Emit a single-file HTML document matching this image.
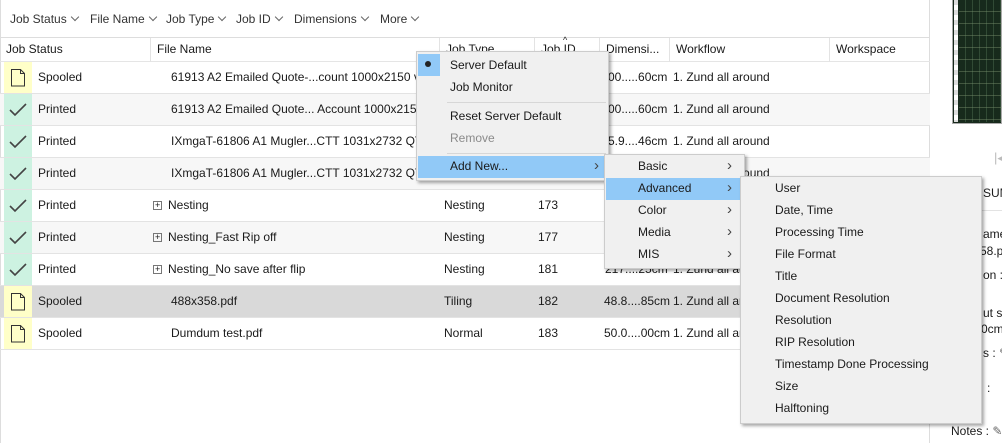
<!DOCTYPE html>
<html><head><meta charset="utf-8"><style>
*{margin:0;padding:0;box-sizing:border-box}
body{width:1002px;height:443px;overflow:hidden;background:#fff;font-family:"Liberation Sans","DejaVu Sans",sans-serif;font-size:12px;color:#1a1a1a;position:relative}
.a{position:absolute;white-space:nowrap}
.tb span{position:absolute;top:12px;color:#333}
.chev{display:inline-block;width:6px;height:6px;border-right:1px solid #666;border-bottom:1px solid #666;transform:rotate(45deg);margin-left:5px;position:relative;top:-3px}
.hdr{position:absolute;top:37px;left:0;width:930px;height:25px;border-top:1px solid #ddd;border-bottom:1px solid #e5e5e5}
.hdr div{position:absolute;top:0;height:24px;line-height:23px;padding-left:6px;border-right:1px solid #e3e3e3}
.row{position:absolute;left:0;width:930px;height:32px;border-bottom:1px solid #e3e3e3}
.row span{position:absolute;top:8px}
.st{position:absolute;left:4px;top:0;width:28px;height:31px}
.y{background:#ffffc8}.g{background:#cdf2e1}
.menu{position:absolute;background:#f0f0f0;border:1px solid #ccc;box-shadow:2px 2px 3px rgba(0,0,0,.35)}
.mi{position:absolute;left:0;right:0;height:22px;line-height:21px}
.hl{background:#91c9f7}
.arr{position:absolute;right:12px;top:-1px;font-size:15px;color:#444}
.sep{position:absolute;height:1px;background:#d7d7d7}
.exp{display:inline-block;width:9px;height:9px;border:1px solid #777;font-size:9px;line-height:7px;text-align:center;margin-right:6px;vertical-align:1px}
</style></head><body>
<div class="a" style="left:0;top:0;width:930px;height:443px;border-right:1px solid #ddd;border-left:1px solid #ddd"></div>
<div class="tb">
<span style="left:10px">Job Status<i class="chev"></i></span>
<span style="left:90px">File Name<i class="chev"></i></span>
<span style="left:166px">Job Type<i class="chev"></i></span>
<span style="left:236px">Job ID<i class="chev"></i></span>
<span style="left:294px">Dimensions<i class="chev"></i></span>
<span style="left:380px">More<i class="chev"></i></span>
</div>
<div class="hdr">
<div style="left:0;width:151px">Job Status</div>
<div style="left:151px;width:289px">File Name</div>
<div style="left:440px;width:95px">Job Type</div>
<div style="left:535px;width:65px">Job ID<span style="position:absolute;left:28px;top:-9px;font-size:9px">^</span></div>
<div style="left:600px;width:70px">Dimensi...</div>
<div style="left:670px;width:160px">Workflow</div>
<div style="left:830px;width:100px;border:none">Workspace</div>
</div>

<div class="row" style="top:62px"><div class="st y"></div><svg class="a" style="left:10px;top:7px" width="16" height="18"><path d="M1.5 .5h9l4 4v12.5h-13z M10.5 .5v4h4" fill="none" stroke="#333"/></svg><span style="left:38px">Spooled</span><span style="left:171px">61913 A2 Emailed Quote-...count 1000x2150 v2</span><span style="left:608px">00.....60cm</span><span style="left:673px">1. Zund all around</span></div>
<div class="row" style="top:94px;background:#f7f7f7"><div class="st g"></div><svg class="a" style="left:9px;top:9px" width="18" height="14"><path d="M1 7l5 5L17 1" fill="none" stroke="#444" stroke-width="1.6"/></svg><span style="left:38px">Printed</span><span style="left:171px">61913 A2 Emailed Quote... Account 1000x2150.</span><span style="left:608px">00.....60cm</span><span style="left:673px">1. Zund all around</span></div>
<div class="row" style="top:126px"><div class="st g"></div><svg class="a" style="left:9px;top:9px" width="18" height="14"><path d="M1 7l5 5L17 1" fill="none" stroke="#444" stroke-width="1.6"/></svg><span style="left:38px">Printed</span><span style="left:171px">IXmgaT-61806 A1 Mugler...CTT 1031x2732 QTR</span><span style="left:608px">5.9....46cm</span><span style="left:673px">1. Zund all around</span></div>
<div class="row" style="top:158px;background:#f7f7f7"><div class="st g"></div><svg class="a" style="left:9px;top:9px" width="18" height="14"><path d="M1 7l5 5L17 1" fill="none" stroke="#444" stroke-width="1.6"/></svg><span style="left:38px">Printed</span><span style="left:171px">IXmgaT-61806 A1 Mugler...CTT 1031x2732 QTR</span><span style="left:673px">1. Zund all around</span></div>
<div class="row" style="top:190px"><div class="st g"></div><svg class="a" style="left:9px;top:9px" width="18" height="14"><path d="M1 7l5 5L17 1" fill="none" stroke="#444" stroke-width="1.6"/></svg><span style="left:38px">Printed</span><span style="left:153px"><i class="exp">+</i>Nesting</span><span style="left:444px">Nesting</span><span style="left:538px">173</span></div>
<div class="row" style="top:222px;background:#f7f7f7"><div class="st g"></div><svg class="a" style="left:9px;top:9px" width="18" height="14"><path d="M1 7l5 5L17 1" fill="none" stroke="#444" stroke-width="1.6"/></svg><span style="left:38px">Printed</span><span style="left:153px"><i class="exp">+</i>Nesting_Fast Rip off</span><span style="left:444px">Nesting</span><span style="left:538px">177</span></div>
<div class="row" style="top:254px"><div class="st g"></div><svg class="a" style="left:9px;top:9px" width="18" height="14"><path d="M1 7l5 5L17 1" fill="none" stroke="#444" stroke-width="1.6"/></svg><span style="left:38px">Printed</span><span style="left:153px"><i class="exp">+</i>Nesting_No save after flip</span><span style="left:444px">Nesting</span><span style="left:538px">181</span><span style="left:605px">217....25cm</span><span style="left:673px">1. Zund all ar</span></div>
<div class="row" style="top:286px;background:#d9d9d9"><div class="st y"></div><svg class="a" style="left:10px;top:7px" width="16" height="18"><path d="M1.5 .5h9l4 4v12.5h-13z M10.5 .5v4h4" fill="none" stroke="#333"/></svg><span style="left:38px">Spooled</span><span style="left:171px">488x358.pdf</span><span style="left:444px">Tiling</span><span style="left:538px">182</span><span style="left:604px">48.8....85cm</span><span style="left:673px">1. Zund all ar</span></div>
<div class="row" style="top:318px"><div class="st y"></div><svg class="a" style="left:10px;top:7px" width="16" height="18"><path d="M1.5 .5h9l4 4v12.5h-13z M10.5 .5v4h4" fill="none" stroke="#333"/></svg><span style="left:38px">Spooled</span><span style="left:171px">Dumdum test.pdf</span><span style="left:444px">Normal</span><span style="left:538px">183</span><span style="left:604px">50.0....00cm</span><span style="left:673px">1. Zund all ar</span></div>

<!-- right panel -->
<div class="a" style="left:952px;top:0;width:50px;height:124px;border:1px solid #aaa;border-top:none;background:#172a1c"></div>
<div class="a" style="left:954px;top:0;width:4px;height:122px;background:repeating-linear-gradient(#ddd 0 5px,#fff 5px 10px)"></div>
<div class="a" style="left:959px;top:0;width:43px;height:122px;background:repeating-linear-gradient(90deg,transparent 0 6px,rgba(110,150,110,.3) 6px 7px),repeating-linear-gradient(transparent 0 11px,rgba(150,170,130,.35) 11px 12px)"></div>
<div class="a" style="left:994px;top:150px;color:#bbb;font-size:13px">|◀</div>
<div class="a" style="left:931px;top:210px;width:71px;height:1px;background:#e3e3e3"></div>
<div class="a" style="left:983px;top:186px">SUM</div>
<div class="a" style="left:983px;top:227px">ame</div>
<div class="a" style="left:980px;top:244px">58.p</div>
<div class="a" style="left:983px;top:268px">on :</div>
<div class="a" style="left:983px;top:306px">ut siz</div>
<div class="a" style="left:981px;top:322px">0cm</div>
<div class="a" style="left:983px;top:346px">s : <b style="color:#666">✎</b></div>
<div class="a" style="left:987px;top:381px">:</div>
<div class="a" style="left:951px;top:424px">Notes : <b style="color:#666">✎</b></div>

<!-- menu 1 -->
<div class="menu" style="left:416px;top:51px;width:193px;height:130px">
<div class="a hl" style="left:1px;top:2px;width:22px;height:22px"></div>
<div class="a" style="left:8px;top:9px;width:6px;height:6px;border-radius:50%;background:#222"></div>
<div class="mi" style="top:3px;padding-left:33px">Server Default</div>
<div class="mi" style="top:25px;padding-left:33px">Job Monitor</div>
<div class="sep" style="left:30px;right:2px;top:50px"></div>
<div class="mi" style="top:54px;padding-left:33px">Reset Server Default</div>
<div class="mi" style="top:76px;padding-left:33px;color:#8a8a8a">Remove</div>
<div class="sep" style="left:30px;right:2px;top:101px"></div>
<div class="mi hl" style="top:104px;left:1px;right:1px;padding-left:32px">Add New...<span class="arr" style="right:8px">›</span></div>
</div>
<!-- menu 2 -->
<div class="menu" style="left:604px;top:154px;width:141px;height:115px">
<div class="mi" style="top:1px;padding-left:33px">Basic<span class="arr">›</span></div>
<div class="mi hl" style="top:23px;left:1px;right:4px;padding-left:32px">Advanced<span class="arr" style="right:8px">›</span></div>
<div class="mi" style="top:45px;padding-left:33px">Color<span class="arr">›</span></div>
<div class="mi" style="top:67px;padding-left:33px">Media<span class="arr">›</span></div>
<div class="mi" style="top:89px;padding-left:33px">MIS<span class="arr">›</span></div>
</div>
<!-- menu 3 -->
<div class="menu" style="left:740px;top:176px;width:242px;height:248px">
<div class="mi" style="top:1px;padding-left:34px">User</div>
<div class="mi" style="top:23px;padding-left:34px">Date, Time</div>
<div class="mi" style="top:45px;padding-left:34px">Processing Time</div>
<div class="mi" style="top:67px;padding-left:34px">File Format</div>
<div class="mi" style="top:89px;padding-left:34px">Title</div>
<div class="mi" style="top:111px;padding-left:34px">Document Resolution</div>
<div class="mi" style="top:133px;padding-left:34px">Resolution</div>
<div class="mi" style="top:155px;padding-left:34px">RIP Resolution</div>
<div class="mi" style="top:177px;padding-left:34px">Timestamp Done Processing</div>
<div class="mi" style="top:199px;padding-left:34px">Size</div>
<div class="mi" style="top:221px;padding-left:34px">Halftoning</div>
</div>
</body></html>
